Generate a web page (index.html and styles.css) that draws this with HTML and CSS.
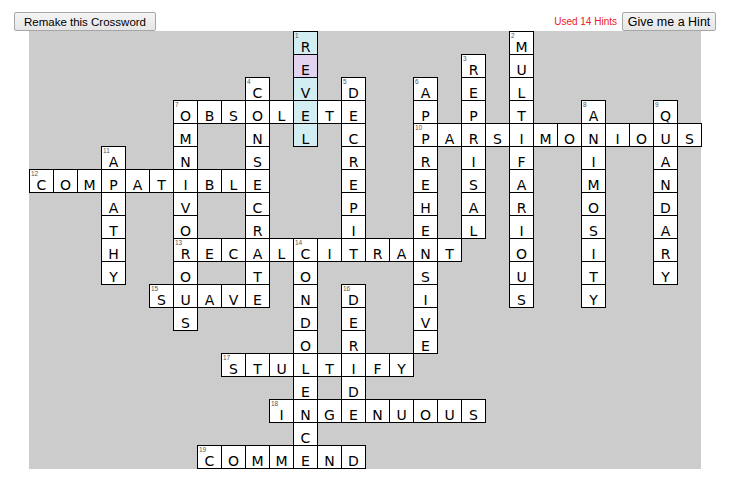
FILE: index.html
```html
<!DOCTYPE html>
<html lang="en">
<head>
<meta charset="utf-8">
<title>Crossword</title>
<link rel="stylesheet" href="styles.css">
</head>
<body>
<div class="toolbar">
  <button class="btn btn-remake" type="button">Remake this Crossword</button>
  <div class="hint-area">
    <span class="hint-count">Used 14 Hints</span>
    <button class="btn btn-hint" type="button">Give me a Hint</button>
  </div>
</div>
<div class="board" id="board"></div>
<script src="script.js"></script>
</body>
</html>
```

FILE: styles.css
```css
html, body {
  margin: 0;
  padding: 0;
  background: #ffffff;
}

body {
  font-family: "Liberation Sans", Arial, sans-serif;
  width: 736px;
}

.toolbar {
  display: flex;
  justify-content: space-between;
  align-items: flex-end;
  height: 31px;
  padding: 0 20px 0 14px;
  box-sizing: border-box;
}

.btn {
  height: 19px;
  margin: 0;
  padding: 0;
  box-sizing: border-box;
  border: 1px solid #a6a6a6;
  border-radius: 2px;
  background: linear-gradient(#f4f4f4, #e6e6e6);
  color: #000;
  font-family: "Liberation Sans", Arial, sans-serif;
  line-height: 16px;
  text-align: center;
}

.btn-remake {
  width: 142px;
  font-size: 11.5px;
}

.btn-hint {
  width: 94px;
  font-size: 12.5px;
}

.hint-area {
  display: flex;
  align-items: flex-end;
  gap: 5px;
}

.hint-count {
  color: #e8202a;
  font-size: 10px;
  line-height: 13px;
  padding-bottom: 3px;
}

.board {
  margin-left: 29px;
  width: 672px;
  height: 438px;
  background: #cccccc;
  display: grid;
  grid-template-columns: repeat(28, 24px);
  grid-template-rows: repeat(19, 23px);
}

.cell {
  position: relative;
  width: 25px;
  height: 24px;
  box-sizing: border-box;
  border: 1px solid #000;
  background: #ffffff;
  padding-top: 8px;
  text-align: center;
  font-family: "DejaVu Sans", "Liberation Sans", sans-serif;
  font-size: 14px;
  line-height: 15px;
  color: #000;
}

.cell.sel {
  background: #d3eef2;
}

.cell.cur {
  background: #e2d4f0;
}

.num {
  position: absolute;
  top: 0;
  left: 1px;
  font-family: "Liberation Sans", Arial, sans-serif;
  font-size: 6.5px;
  line-height: 7px;
  color: #555;
}
```

FILE: script.js
```js
(function () {
  var words = [
    ["OBSOLETE", 3, 6, "a"],
    ["PARSIMONIOUS", 4, 16, "a"],
    ["COMPATIBLE", 6, 0, "a"],
    ["RECALCITRANT", 9, 6, "a"],
    ["SUAVE", 11, 5, "a"],
    ["STULTIFY", 14, 8, "a"],
    ["INGENUOUS", 16, 10, "a"],
    ["COMMEND", 18, 7, "a"],
    ["REVEL", 0, 11, "d"],
    ["MULTIFARIOUS", 0, 20, "d"],
    ["REPRISAL", 1, 18, "d"],
    ["CONSECRATE", 2, 9, "d"],
    ["DECREPIT", 2, 13, "d"],
    ["APPREHENSIVE", 2, 16, "d"],
    ["OMNIVOROUS", 3, 6, "d"],
    ["ANIMOSITY", 3, 23, "d"],
    ["QUANDARY", 3, 26, "d"],
    ["APATHY", 5, 3, "d"],
    ["CONDOLENCE", 9, 11, "d"],
    ["DERIDE", 11, 13, "d"]
  ];
  var cells = {};
  var starts = {};
  words.forEach(function (w) {
    var text = w[0], r = w[1], c = w[2], dir = w[3];
    starts[r + "," + c] = true;
    for (var i = 0; i < text.length; i++) {
      var rr = dir === "a" ? r : r + i;
      var cc = dir === "a" ? c + i : c;
      cells[rr + "," + cc] = text[i];
    }
  });
  var startKeys = Object.keys(starts).map(function (k) {
    var p = k.split(",");
    return [parseInt(p[0], 10), parseInt(p[1], 10)];
  }).sort(function (a, b) { return a[0] - b[0] || a[1] - b[1]; });
  var nums = {};
  startKeys.forEach(function (p, i) { nums[p[0] + "," + p[1]] = i + 1; });

  var board = document.getElementById("board");
  var keys = Object.keys(cells).map(function (k) {
    var p = k.split(",");
    return [parseInt(p[0], 10), parseInt(p[1], 10)];
  }).sort(function (a, b) { return a[0] - b[0] || a[1] - b[1]; });

  keys.forEach(function (p) {
    var k = p[0] + "," + p[1];
    var d = document.createElement("div");
    d.className = "cell";
    if (p[1] === 11 && p[0] <= 4) {
      d.className += p[0] === 1 ? " cur" : " sel";
    }
    d.style.gridRow = String(p[0] + 1);
    d.style.gridColumn = String(p[1] + 1);
    if (nums[k]) {
      var n = document.createElement("span");
      n.className = "num";
      n.textContent = nums[k];
      d.appendChild(n);
    }
    d.appendChild(document.createTextNode(cells[k]));
    board.appendChild(d);
  });
})();
```
